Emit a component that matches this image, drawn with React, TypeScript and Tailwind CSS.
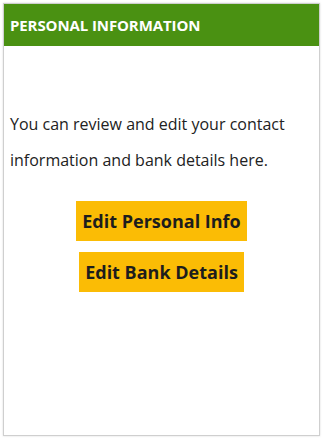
export default function App() {
  return (
    <div className="p-[3px] bg-white" style={{ fontFamily: '"Open Sans", "Noto Sans", sans-serif' }}>
      <div className="h-[433px] w-[317px] border border-[#cfcfcf] bg-white shadow-[0_0_2px_rgba(0,0,0,0.15)] flex flex-col">
        <div className="h-[42px] bg-[#4a9112] flex items-center px-[6px]">
          <h3 className="text-white font-bold text-[15px] tracking-[-0.1px]">PERSONAL INFORMATION</h3>
        </div>
        <div className="px-[6px] pt-[60px]">
          <p className="text-[#222] text-[16px] leading-[36px]">
            You can review and edit your contact information and bank details here.
          </p>
          <div className="flex flex-col items-center gap-[11px] mt-[23px]">
            <button className="h-[40px] px-[6px] bg-[#fbbc05] text-[#1d1d1d] font-bold text-[18px]">
              Edit Personal Info
            </button>
            <button className="h-[40px] px-[6px] bg-[#fbbc05] text-[#1d1d1d] font-bold text-[18px]">
              Edit Bank Details
            </button>
          </div>
        </div>
      </div>
    </div>
  )
}
